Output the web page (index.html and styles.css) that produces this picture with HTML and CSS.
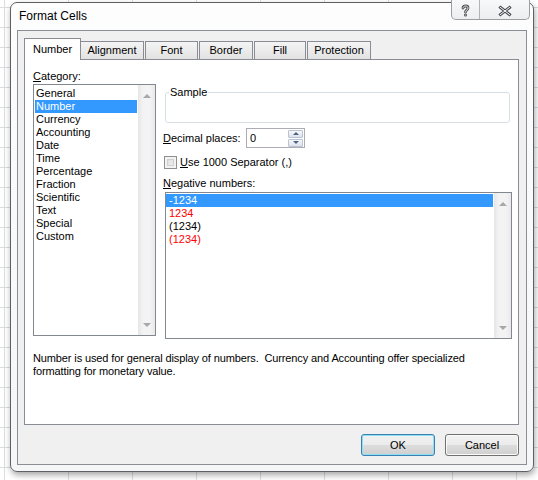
FILE: index.html
```html
<!DOCTYPE html>
<html>
<head>
<meta charset="utf-8">
<link rel="stylesheet" href="styles.css">
</head>
<body>
<div class="window">
  <div class="titlebar">
    <span class="title">Format Cells</span>
    <div class="caption-btns">
      <div class="cap cap-help">
        <svg width="9" height="13" viewBox="0 0 9 13">
          <path d="M2 4 C2 1.3 7 1.3 7 4 C7 6 4.5 6 4.5 8" fill="none" stroke="#4a4d52" stroke-width="2.8" stroke-linecap="round"/>
          <circle cx="4.5" cy="11" r="1.5" fill="#4a4d52"/>
          <path d="M2 4 C2 1.3 7 1.3 7 4 C7 6 4.5 6 4.5 8" fill="none" stroke="#ffffff" stroke-width="0.9" stroke-linecap="round"/>
          <circle cx="4.5" cy="11" r="0.5" fill="#ffffff"/>
        </svg>
      </div>
      <div class="cap cap-close">
        <svg width="16" height="12" viewBox="0 0 16 12">
          <path d="M3.5 2.5 L12.5 9.5 M12.5 2.5 L3.5 9.5" fill="none" stroke="#4a4d52" stroke-width="3" stroke-linecap="square"/>
          <path d="M3.5 2.5 L12.5 9.5 M12.5 2.5 L3.5 9.5" fill="none" stroke="#ffffff" stroke-width="1" stroke-linecap="square"/>
        </svg>
      </div>
    </div>
  </div>
  <div class="client">
    <div class="tabs">
      <div class="tab active w-number">Number</div>
      <div class="tab w-align">Alignment</div>
      <div class="tab gap w-font">Font</div>
      <div class="tab gap w-border">Border</div>
      <div class="tab gap w-fill">Fill</div>
      <div class="tab gap w-prot">Protection</div>
    </div>
    <div class="panel">
      <div class="top">
        <div class="col-left">
          <div class="label"><u>C</u>ategory:</div>
          <div class="listbox cat">
            <ul class="items">
              <li>General</li>
              <li class="sel">Number</li>
              <li>Currency</li>
              <li>Accounting</li>
              <li>Date</li>
              <li>Time</li>
              <li>Percentage</li>
              <li>Fraction</li>
              <li>Scientific</li>
              <li>Text</li>
              <li>Special</li>
              <li>Custom</li>
            </ul>
            <div class="scrollbar"><span class="arr up"></span><span class="arr down"></span></div>
          </div>
        </div>
        <div class="col-right">
          <fieldset class="sample"><legend>Sample</legend></fieldset>
          <div class="row dec">
            <span class="dec-label"><u>D</u>ecimal places:</span>
            <div class="spin">
              <span class="val">0</span>
              <div class="spinbtns"><span class="sb"><i class="tri up"></i></span><span class="sb"><i class="tri down"></i></span></div>
            </div>
          </div>
          <div class="row chk">
            <span class="checkbox"></span>
            <span><u>U</u>se 1000 Separator (,)</span>
          </div>
          <div class="label neg-label"><u>N</u>egative numbers:</div>
          <div class="listbox neg">
            <ul class="items">
              <li class="sel">-1234</li>
              <li class="red">1234</li>
              <li>(1234)</li>
              <li class="red">(1234)</li>
            </ul>
            <div class="scrollbar"><span class="arr up"></span><span class="arr down"></span></div>
          </div>
        </div>
      </div>
      <p class="desc">Number is used for general display of numbers.&nbsp; Currency and Accounting offer specialized<br>formatting for monetary value.</p>
    </div>
    <div class="buttons">
      <button class="btn ok">OK</button>
      <button class="btn">Cancel</button>
    </div>
  </div>
</div>
</body>
</html>
```
FILE: styles.css
```css
* { box-sizing: border-box; }
html, body { margin: 0; padding: 0; }
body {
  width: 538px;
  height: 480px;
  overflow: hidden;
  background-color: #ffffff;
  background-image:
    linear-gradient(to right, #dadcde 1px, transparent 1px),
    linear-gradient(to bottom, #dadcde 1px, transparent 1px);
  background-size: 64px 20px;
  background-position: 4px 7px;
  font-family: "Liberation Sans", Arial, sans-serif;
  font-size: 11px;
  color: #000;
  padding-top: 2px;
}
.window {
  margin-left: 10px;
  width: 524px;
  height: 470px;
  border: 1px solid #5e6064;
  border-radius: 7px;
  background: linear-gradient(to bottom, #fdfdfe, #f4f6f8);
  box-shadow: 1px 3px 6px rgba(0,0,0,0.35);
  display: flex;
  flex-direction: column;
  padding: 0 6px 6px 6px;
}
.titlebar {
  height: 27px;
  display: flex;
  align-items: flex-start;
  flex: none;
}
.title {
  padding: 6px 0 0 2px;
  font-size: 12px;
  line-height: 14px;
  color: #000;
}
.caption-btns {
  margin-left: auto;
  margin-top: -4px;
  margin-right: -3px;
  display: flex;
  height: 21px;
  border: 1px solid #9a9ea2;
  border-top: none;
  border-radius: 0 0 5px 5px;
  background: linear-gradient(to bottom, #f8f9fa, #eceef0);
  overflow: hidden;
}
.cap {
  display: flex;
  align-items: center;
  justify-content: center;
  padding-top: 3px;
}
.cap-help { width: 28px; border-right: 1px solid #b0b4b8; }
.cap-close { width: 49px; }
.client {
  flex: 1;
  border: 1px solid #8b8e93;
  background: #f0f0f0;
  padding: 7px 7px 0 6px;
  display: flex;
  flex-direction: column;
}
.tabs {
  height: 21px;
  display: flex;
  align-items: flex-end;
  flex: none;
}
.tab {
  height: 18px;
  border: 1px solid #898c95;
  border-bottom: none;
  background: linear-gradient(to bottom, #f4f4f4, #e2e2e2);
  text-align: center;
  line-height: 17px;
  flex: none;
}
.tab.gap { margin-left: 1px; }
.tab.active {
  height: 22px;
  margin-bottom: -1px;
  background: #ffffff;
  position: relative;
  z-index: 1;
  line-height: 20px;
}
.w-number { width: 57px; }
.w-align { width: 63px; border-left: none; }
.w-font { width: 53px; }
.w-border { width: 54px; }
.w-fill { width: 52px; }
.w-prot { width: 64px; }
.panel {
  width: 495px;
  height: 366px;
  flex: none;
  border: 1px solid #898c95;
  background: #ffffff;
  padding: 10px 6px 0 8px;
}
.top {
  display: flex;
  gap: 7px;
}
.col-left { width: 123px; flex: none; }
.col-right { width: 349px; flex: none; display: flex; flex-direction: column; }
.label { line-height: 13px; height: 13px; }
.listbox {
  border: 1px solid #828790;
  display: flex;
  background: #fff;
}
.listbox.cat { margin-top: 1px; height: 252px; }
.items {
  list-style: none;
  margin: 0;
  flex: 1;
  padding: 2px 1px 0 1px;
}
.items li {
  height: 13px;
  line-height: 13px;
  padding-left: 1px;
  white-space: nowrap;
}
.items li.sel { background: #3399ff; color: #fff; }
.items li.red { color: #ff0000; }
.neg .items { padding: 1px 1px 0 0; }
.neg .items li { padding-left: 3px; }
.scrollbar {
  width: 17px;
  flex: none;
  background: linear-gradient(to right, #e6e6e6, #f3f3f3 30%, #f3f3f3 70%, #e9e9e9);
  display: flex;
  flex-direction: column;
  justify-content: space-between;
  align-items: center;
  padding: 9px 0 8px;
}
.arr {
  width: 0;
  height: 0;
  border-left: 4px solid transparent;
  border-right: 4px solid transparent;
}
.arr.up { border-bottom: 4px solid #a8a8a8; }
.arr.down { border-top: 4px solid #a8a8a8; }
.sample {
  margin: 16px 0 0 2px;
  width: 345px;
  height: 37px;
  border: 1px solid #d5dfe5;
  border-radius: 3px;
  padding: 0;
  min-width: 0;
}
.sample legend {
  padding: 0 1px;
  margin-left: 3px;
  line-height: 13px;
}
.row { display: flex; align-items: center; }
.dec { margin-top: 5px; height: 20px; }
.dec-label { width: 83px; flex: none; }
.spin {
  width: 59px;
  height: 20px;
  border: 1px solid #abadb3;
  background: #fff;
  display: flex;
  align-items: center;
  padding: 1px 1px 1px 3px;
}
.spin .val { flex: 1; }
.spinbtns {
  width: 15px;
  height: 17px;
  display: flex;
  flex-direction: column;
  gap: 1px;
}
.sb {
  flex: 1;
  border: 1px solid #b9c3d2;
  border-radius: 1px;
  background: linear-gradient(to bottom, #f7f8fa, #dde2ea);
  display: flex;
  align-items: center;
  justify-content: center;
}
.tri {
  width: 0; height: 0;
  border-left: 3px solid transparent;
  border-right: 3px solid transparent;
}
.tri.up { border-bottom: 3px solid #4d6185; }
.tri.down { border-top: 3px solid #4d6185; }
.chk { margin-top: 8px; height: 13px; line-height: 13px; }
.checkbox {
  width: 13px;
  height: 13px;
  margin-left: 1px;
  margin-right: 3px;
  border: 1px solid #8e8f8f;
  background: linear-gradient(135deg, #d8d8d8, #f6f6f6);
  box-shadow: inset 0 0 0 2px #f3f3f3, inset 0 0 0 3px #cfcfcf;
  flex: none;
}
.neg-label { margin-top: 8px; }
.listbox.neg { margin: 2px 0 0 2px; width: 347px; height: 147px; }
.desc {
  margin: 13px 0 0 0;
  line-height: 13px;
  letter-spacing: -0.12px;
}
.buttons {
  display: flex;
  justify-content: flex-end;
  gap: 10px;
  margin-top: 9px;
  width: 495px;
}
.btn {
  width: 74px;
  height: 22px;
  font-family: "Liberation Sans", Arial, sans-serif;
  font-size: 11px;
  color: #000;
  border: 1px solid #707070;
  border-radius: 3px;
  background: linear-gradient(to bottom, #f2f2f2 0%, #ebebeb 50%, #dddddd 51%, #cfcfcf 100%);
  box-shadow: inset 0 0 0 1px #fbfbfb;
  padding: 0;
}
.btn.ok {
  border-color: #3c7fb1;
  box-shadow: inset 0 0 0 1px #8ce0f6;
}
```
